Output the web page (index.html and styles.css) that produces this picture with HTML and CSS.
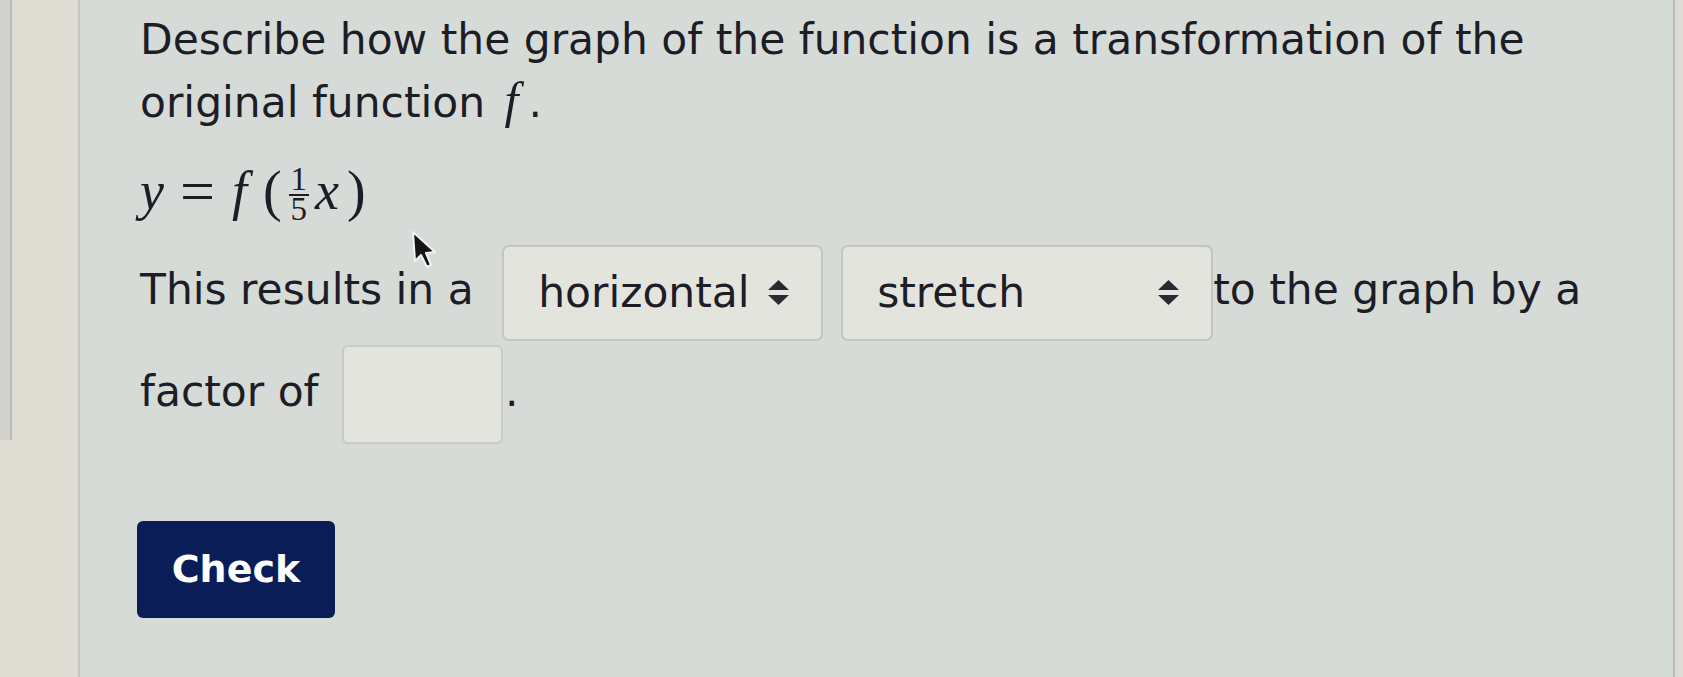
FILE: index.html
```html
<!DOCTYPE html>
<html lang="en">
<head>
  <meta charset="UTF-8">
  <title>Transformation Question</title>
  <link rel="stylesheet" href="styles.css">
</head>
<body>
  <div class="page">
    <div class="gutter"><div class="gutter-line"></div></div>

    <div class="panel">
      <p class="prompt">Describe how the graph of the function is a transformation of the original function <span class="mi mi-f">f</span>.</p>

      <!-- equation: y = f(1/5 x) -->
      <p class="equation">
        <span class="mi">y</span><span class="mo">=</span><span class="mi">f</span><span class="paren open">(</span><span class="frac"><span class="num">1</span><span class="den">5</span></span><span class="mi">x</span><span class="paren close">)</span>
      </p>

      <p class="answer">
        This results in a
        <span class="select select-dir">horizontal<svg class="caret" viewBox="0 0 21 25"><path d="M10.5 0 L21 10 H0 Z M10.5 25 L21 15 H0 Z"/></svg></span><span class="select select-kind">stretch<svg class="caret" viewBox="0 0 21 25"><path d="M10.5 0 L21 10 H0 Z M10.5 25 L21 15 H0 Z"/></svg></span>to the graph by a
        factor of <span class="blank"></span>.
      </p>

      <button class="check">Check</button>

      <svg class="pointer" viewBox="0 0 28 40"><path d="M3 2 L5 31 L11 25 L17 37 L21 35 L16 23 L25 22 Z" fill="#141418" stroke="#f2f2f0" stroke-width="2" stroke-linejoin="round"/></svg>
    </div>

    <div class="edge"></div>
  </div>
</body>
</html>
```

FILE: styles.css
```css
body {
  margin: 0;
  font-family: 'DejaVu Sans', Verdana, sans-serif;
  background-color: #d3d4d0;
  color: #1c1d26;
}

.page {
  display: flex;
  height: 677px;
  overflow: hidden;
}

.gutter {
  width: 78px;
  flex-shrink: 0;
  background-color: #dedbd2;
  display: flex;
}

.gutter-line {
  width: 10px;
  height: 440px;
  background-color: #d0d0cc;
  border-right: 2px solid #b9b9b5;
}

.panel {
  position: relative;
  flex: 1;
  background-color: #d6dbd7;
  border-left: 2px solid #c3c7c3;
  padding: 10px 20px 0 60px;
  font-size: 42.4px;
}

.prompt {
  margin: 0;
  line-height: 60px;
}

.mi {
  font-family: 'Liberation Serif', 'Times New Roman', serif;
  font-style: italic;
}

.mi-f {
  font-size: 50px;
  margin: 0 10px 0 6px;
}

.equation {
  margin: 28px 0 0;
  height: 60px;
  font-size: 54px;
  display: flex;
  align-items: center;
  line-height: 1;
}

.equation .mo {
  font-family: 'Liberation Serif', serif;
  font-size: 62px;
  margin: 0 17px 0 16px;
}

.equation .paren {
  font-family: 'Liberation Serif', serif;
  font-size: 56px;
}

.equation .open {
  margin: 0 7px 0 16px;
}

.equation .close {
  margin-left: 8px;
}

.frac {
  display: inline-flex;
  flex-direction: column;
  align-items: center;
  font-family: 'Liberation Serif', serif;
  font-size: 33px;
  line-height: 27px;
  margin: 6px 6px 0 0;
}

.frac .num {
  border-bottom: 2px solid #1c1d26;
  padding: 0 2px 1px;
}

.answer {
  margin: 18px 0 0;
  line-height: 101px;
}

.select {
  display: inline-flex;
  align-items: center;
  justify-content: space-between;
  box-sizing: border-box;
  height: 96px;
  vertical-align: middle;
  padding: 0 32px 0 34px;
  background-color: #e4e4df;
  border: 2px solid #c4c5c0;
  border-radius: 7px;
  line-height: normal;
}

.select-dir {
  width: 321px;
  margin-left: 15px;
}

.select-kind {
  width: 372px;
  margin-left: 18px;
}

.caret {
  flex-shrink: 0;
  width: 21px;
  height: 25px;
  fill: #2a2a33;
}

.blank {
  display: inline-block;
  box-sizing: border-box;
  width: 161px;
  height: 99px;
  vertical-align: middle;
  margin: 0 2px 0 10px;
  background-color: #e4e4df;
  border: 2px solid #c9cac5;
  border-radius: 6px;
}

.check {
  display: block;
  margin-top: 77px;
  margin-left: -3px;
  width: 198px;
  height: 97px;
  background-color: #0b1d57;
  color: #fff;
  border: none;
  border-radius: 6px;
  font-family: 'DejaVu Sans', Verdana, sans-serif;
  font-size: 38px;
  font-weight: bold;
}

.pointer {
  position: absolute;
  left: 330px;
  top: 230px;
  width: 28px;
  height: 40px;
}

.edge {
  width: 8px;
  flex-shrink: 0;
  background-color: #dfdcd7;
  border-left: 2px solid #b9bdb9;
}
```
